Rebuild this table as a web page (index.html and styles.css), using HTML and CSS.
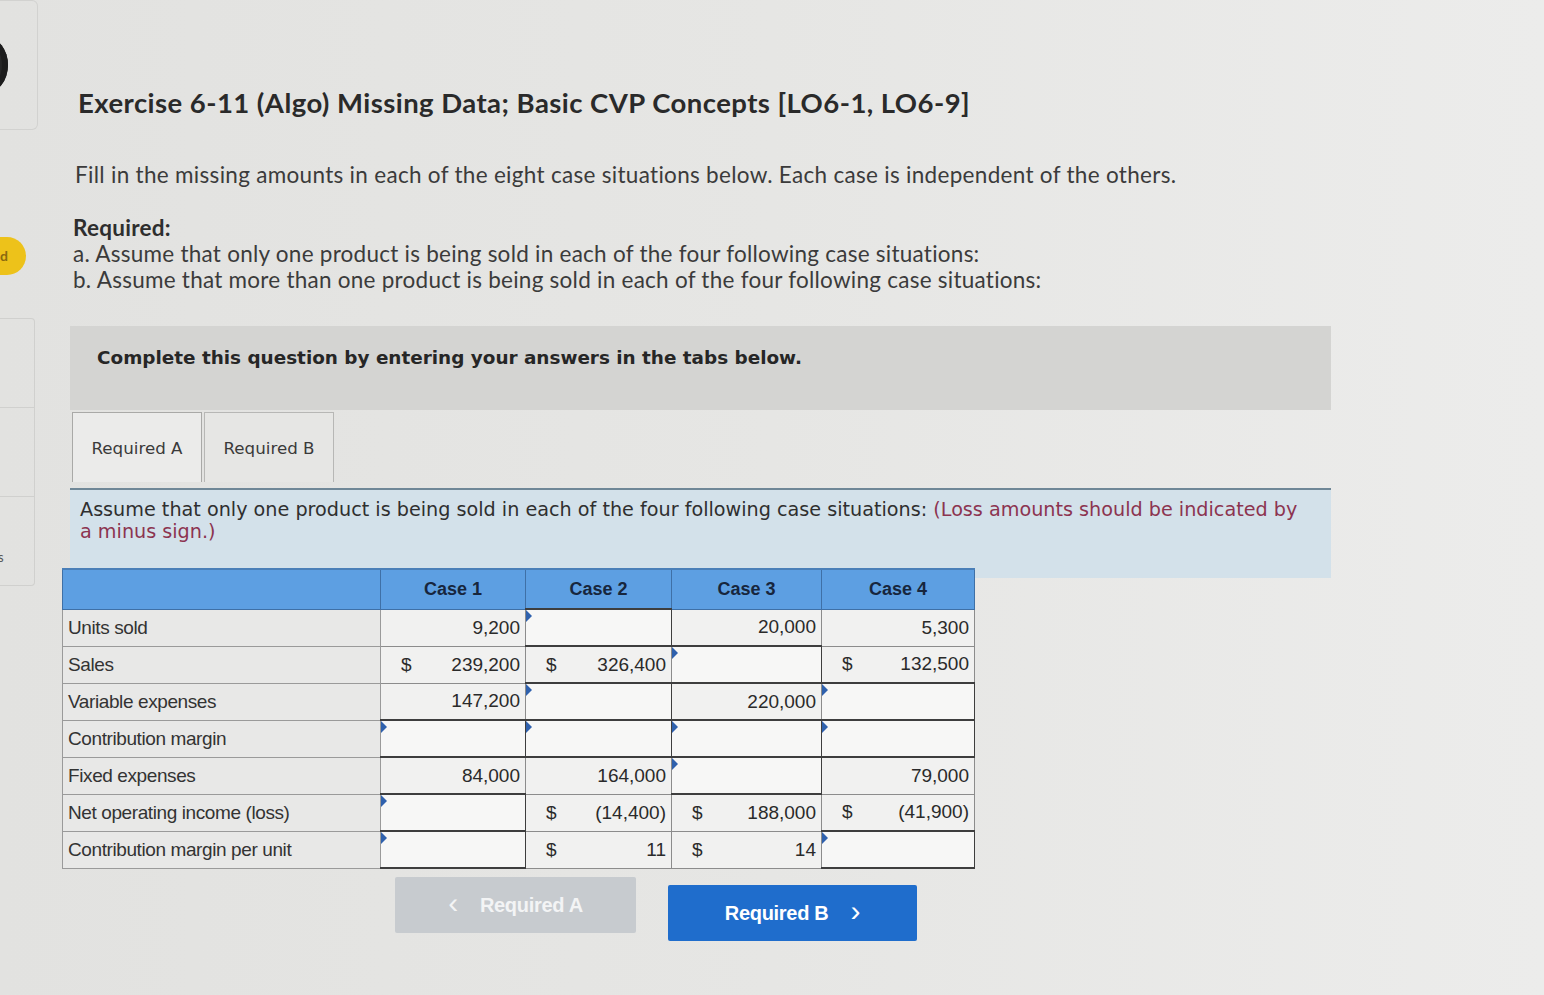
FILE: index.html
```html
<!DOCTYPE html>
<html lang="en">
<head>
<meta charset="utf-8">
<title>Exercise 6-11 (Algo) Missing Data; Basic CVP Concepts</title>
<link rel="stylesheet" href="styles.css">
</head>
<body>
<div class="page">
  <aside class="rail">
    <div class="rail-card"><div class="rail-dot"></div></div>
    <div class="rail-badge">d</div>
    <div class="rail-stack">
      <div class="rail-seg"></div>
      <div class="rail-seg"></div>
      <div class="rail-seg last"><span>s</span></div>
    </div>
  </aside>

  <main class="main">
    <h1 class="title">Exercise 6-11 (Algo) Missing Data; Basic CVP Concepts [LO6-1, LO6-9]</h1>
    <p class="intro">Fill in the missing amounts in each of the eight case situations below. Each case is independent of the others.</p>
    <div class="req">
      <div class="req-head">Required:</div>
      <div>a. Assume that only one product is being sold in each of the four following case situations:</div>
      <div>b. Assume that more than one product is being sold in each of the four following case situations:</div>
    </div>

    <div class="notice">Complete this question by entering your answers in the tabs below.</div>

    <div class="tabs">
      <div class="tab active">Required A</div>
      <div class="tab">Required B</div>
    </div>

    <div class="instr">Assume that only one product is being sold in each of the four following case situations: <span class="warn">(Loss amounts should be indicated by</span> <span class="warn">a minus sign.)</span></div>

    <table class="grid">
      <colgroup>
        <col class="c-label"><col class="c1"><col class="c2"><col class="c3"><col class="c4">
      </colgroup>
      <thead>
        <tr><th></th><th>Case 1</th><th>Case 2</th><th>Case 3</th><th>Case 4</th></tr>
      </thead>
      <tbody>
        <tr>
          <td class="lbl">Units sold</td>
          <td class="val"><span class="num">9,200</span></td>
          <td class="inp"><i class="mark"></i></td>
          <td class="val"><span class="num">20,000</span></td>
          <td class="val"><span class="num">5,300</span></td>
        </tr>
        <tr>
          <td class="lbl">Sales</td>
          <td class="val"><span class="cur">$</span><span class="num">239,200</span></td>
          <td class="val"><span class="cur">$</span><span class="num">326,400</span></td>
          <td class="inp"><i class="mark"></i></td>
          <td class="val"><span class="cur">$</span><span class="num">132,500</span></td>
        </tr>
        <tr>
          <td class="lbl">Variable expenses</td>
          <td class="val"><span class="num">147,200</span></td>
          <td class="inp"><i class="mark"></i></td>
          <td class="val"><span class="num">220,000</span></td>
          <td class="inp"><i class="mark"></i></td>
        </tr>
        <tr>
          <td class="lbl">Contribution margin</td>
          <td class="inp"><i class="mark"></i></td>
          <td class="inp"><i class="mark"></i></td>
          <td class="inp"><i class="mark"></i></td>
          <td class="inp"><i class="mark"></i></td>
        </tr>
        <tr>
          <td class="lbl">Fixed expenses</td>
          <td class="val"><span class="num">84,000</span></td>
          <td class="val"><span class="num">164,000</span></td>
          <td class="inp"><i class="mark"></i></td>
          <td class="val"><span class="num">79,000</span></td>
        </tr>
        <tr>
          <td class="lbl">Net operating income (loss)</td>
          <td class="inp"><i class="mark"></i></td>
          <td class="val"><span class="cur">$</span><span class="num">(14,400)</span></td>
          <td class="val"><span class="cur">$</span><span class="num">188,000</span></td>
          <td class="val"><span class="cur">$</span><span class="num">(41,900)</span></td>
        </tr>
        <tr>
          <td class="lbl">Contribution margin per unit</td>
          <td class="inp"><i class="mark"></i></td>
          <td class="val"><span class="cur">$</span><span class="num">11</span></td>
          <td class="val"><span class="cur">$</span><span class="num">14</span></td>
          <td class="inp"><i class="mark"></i></td>
        </tr>
      </tbody>
    </table>

    <div class="nav">
      <button class="btn prev" disabled><span class="chev">&lsaquo;</span>Required A</button>
      <button class="btn next">Required B<span class="chev">&rsaquo;</span></button>
    </div>
  </main>
</div>
</body>
</html>
```
FILE: styles.css
```css
html, body {
  margin: 0;
  padding: 0;
}
body {
  background: linear-gradient(90deg, #e2e2e0 0%, #e6e6e4 50%, #ececeb 100%);
  font-family: "Lato", "Open Sans", sans-serif;
  color: #333;
  width: 1544px;
  height: 995px;
  overflow: hidden;
}
.page {
  display: flex;
}

/* left rail (cut off) */
.rail {
  width: 40px;
  flex: none;
  display: flex;
  flex-direction: column;
}
.rail-card {
  width: 38px;
  height: 130px;
  border: 1px solid #d2d2d0;
  border-left: none;
  border-radius: 0 6px 6px 0;
  box-sizing: border-box;
  overflow: hidden;
  display: flex;
  align-items: center;
}
.rail-dot {
  width: 44px;
  height: 56px;
  margin-left: -36px;
  border-radius: 50%;
  background: #262626;
  box-shadow: inset 0 0 0 6px #1c1c1c;
  flex: none;
}
.rail-badge {
  margin-top: 107px;
  width: 26px;
  height: 38px;
  background: #edc21a;
  border-radius: 0 19px 19px 0;
  color: #8a6a10;
  font-size: 14px;
  font-weight: 700;
  line-height: 38px;
  box-sizing: border-box;
}
.rail-stack {
  margin-top: 43px;
  width: 34px;
  border: 1px solid #d0d0ce;
  border-left: none;
  border-radius: 0 4px 4px 0;
  display: flex;
  flex-direction: column;
}
.rail-seg {
  height: 88px;
  border-bottom: 1px solid #d0d0ce;
}
.rail-seg.last {
  border-bottom: none;
  display: flex;
  align-items: flex-end;
  padding-bottom: 20px;
  box-sizing: border-box;
}
.rail-seg span {
  font-size: 13px;
  color: #555;
  margin-left: -2px;
}

/* main content */
.main {
  flex: none;
  width: 1270px;
  margin-left: 26px;
  padding-top: 86px;
}
.title {
  margin: 0 0 0 12px;
  font-size: 27.5px;
  font-weight: 700;
  line-height: 34px;
  color: #2a2a2a;
  letter-spacing: 0.45px;
}
.intro {
  margin: 42px 0 0 9px;
  font-size: 22.5px;
  line-height: 26px;
  letter-spacing: 0.3px;
  color: #3b3b3b;
}
.req {
  margin: 27px 0 0 7px;
  font-size: 22.5px;
  line-height: 26px;
  letter-spacing: 0.25px;
  color: #3b3b3b;
}
.req-head {
  font-weight: 700;
  color: #2e2e2e;
}

.notice {
  margin: 33px 0 0 4px;
  width: 1261px;
  height: 84px;
  box-sizing: border-box;
  background: #d4d4d2;
  padding: 21px 0 0 27px;
  font-family: "DejaVu Sans", "Verdana", sans-serif;
  font-weight: 700;
  font-size: 18.4px;
  line-height: 22px;
  color: #262626;
}

.tabs {
  display: flex;
  gap: 2px;
  margin: 2px 0 0 6px;
}
.tab {
  width: 130px;
  height: 70px;
  box-sizing: border-box;
  border: 1px solid #b7b7b5;
  border-bottom: none;
  display: flex;
  align-items: center;
  justify-content: center;
  font-family: "DejaVu Sans", "Verdana", sans-serif;
  font-size: 16.7px;
  color: #3a3a3a;
  background: #e6e6e4;
}
.tab.active {
  background: #ebebea;
  border-color: #a9a9a7;
}

.instr {
  margin: 6px 0 0 4px;
  width: 1261px;
  height: 90px;
  box-sizing: border-box;
  background: #d3e1ea;
  border-top: 2px solid #6f8797;
  padding: 9px 22px 0 10px;
  font-family: "DejaVu Sans", "Verdana", sans-serif;
  font-size: 19.2px;
  line-height: 22px;
  color: #2f2f2f;
}
.warn {
  color: #8c3450;
}

/* table */
.grid {
  margin: -10px 0 0 -4px;
  border-collapse: collapse;
  table-layout: fixed;
  width: 912px;
  font-family: "Liberation Sans", Arial, sans-serif;
  font-size: 19px;
  color: #2a2a2a;
  position: relative;
}
.c-label { width: 318px; }
.c1 { width: 145px; }
.c2 { width: 146px; }
.c3 { width: 150px; }
.c4 { width: 153px; }
.grid th {
  height: 38px;
  background: #5d9fe2;
  border: 1px solid #3f70a6;
  border-top: 2px solid #4a7fb8;
  font-size: 18px;
  font-weight: 700;
  color: #17263d;
  text-align: center;
  padding: 0;
}
.grid td {
  height: 35px;
  border: 1px solid #8c8c8c;
  padding: 0;
  position: relative;
}
.grid td.lbl {
  background: #e8e8e7;
  padding-left: 5px;
  letter-spacing: -0.4px;
  color: #333;
  border-color: #9a9a9a;
}
.grid td.val {
  background: #f1f1f0;
  text-align: right;
  padding-right: 5px;
}
.cur {
  float: left;
  margin-left: 20px;
}
.grid td.inp {
  background: #f7f7f6;
  border: 2px solid #3e3e3e;
  border-right-width: 1px;
  border-left-width: 1px;
}
.mark {
  position: absolute;
  left: 0;
  top: 0;
  width: 0;
  height: 0;
  border-top: 6px solid transparent;
  border-bottom: 6px solid transparent;
  border-left: 6px solid #2f61ad;
}

/* nav buttons */
.nav {
  display: flex;
  gap: 32px;
  margin: 8px 0 0 329px;
}
.btn {
  height: 56px;
  border: none;
  border-radius: 2px;
  font-family: "Liberation Sans", Arial, sans-serif;
  font-weight: 700;
  font-size: 20px;
  letter-spacing: -0.3px;
  display: flex;
  align-items: center;
  justify-content: center;
  gap: 22px;
  padding: 0;
}
.btn .chev {
  font-weight: 400;
  font-size: 30px;
  line-height: 1;
  margin-top: -4px;
}
.btn.prev {
  width: 241px;
  background: #c7cbcf;
  color: #f3f4f5;
}
.btn.next {
  width: 249px;
  margin-top: 8px;
  background: #1f6dcc;
  color: #ffffff;
}
```
